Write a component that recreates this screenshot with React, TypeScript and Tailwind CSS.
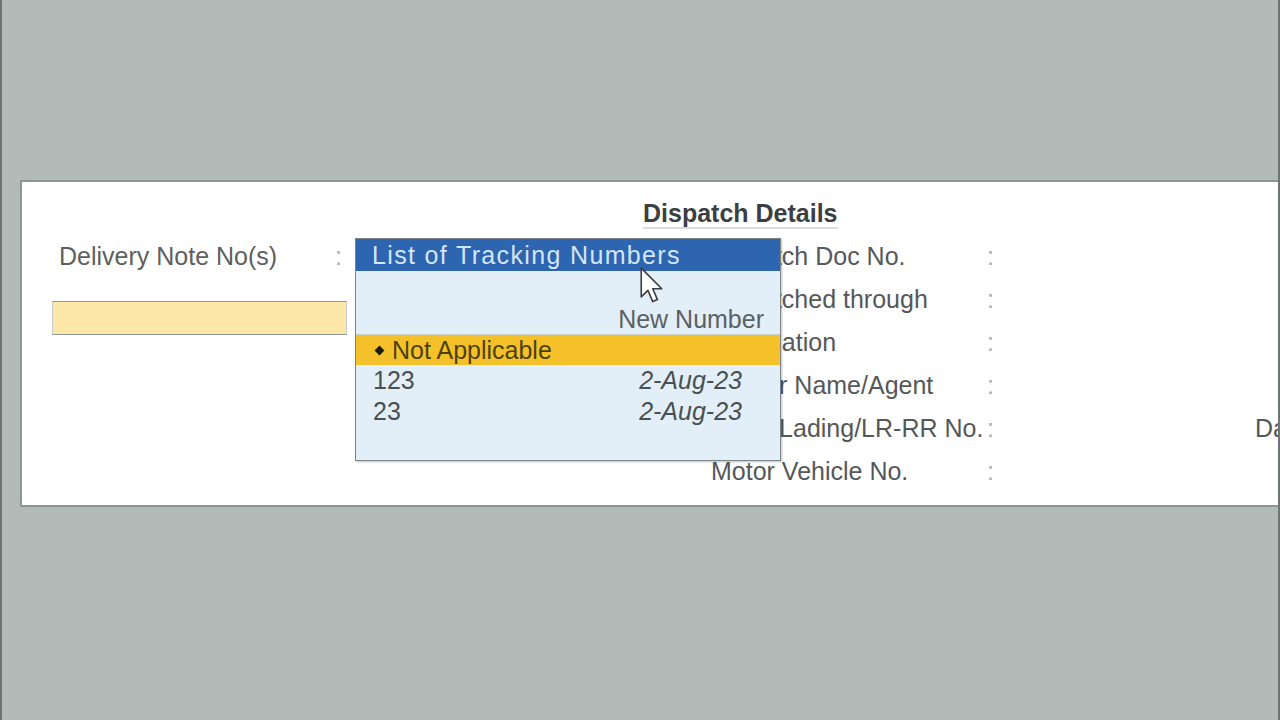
import React from "react";

const font = { fontFamily: '"Liberation Sans", Arial, sans-serif' };

const dispatchRows = [
  "Dispatch Doc No.",
  "Dispatched through",
  "Destination",
  "Carrier Name/Agent",
  "Bill of Lading/LR-RR No.",
  "Motor Vehicle No.",
];

const trackingRows = [
  { no: "123", date: "2-Aug-23" },
  { no: "23", date: "2-Aug-23" },
];

function Cursor() {
  return (
    <svg width="23" height="36" viewBox="0 0 12.6 20" className="absolute left-[284px] top-[28px]">
      <path
        d="M0.6 0.6 L0.6 16.6 L4.3 13 L7 19.2 L9.6 18.1 L7 12.1 L12 12.1 Z"
        fill="#ffffff"
        stroke="#3a3f44"
        strokeWidth="0.9"
        strokeLinejoin="round"
      />
    </svg>
  );
}

function TrackingPopup() {
  return (
    <div className="absolute left-[333px] top-[56px] w-[426px] h-[223px] border border-[#7c8587] bg-[#e3eff8] shadow-[1px_1px_2px_rgba(0,0,0,0.25)]">
      <div className="h-[32px] bg-[#2d65b1] pl-[16px] text-[25px] leading-[32px] tracking-[1.35px] text-[#d5e5fa]">
        List of Tracking Numbers
      </div>
      <div className="h-[33px]" />
      <div className="h-[30px] pr-[16px] text-right text-[25px] leading-[30px] text-[#5b6063]">
        New Number
      </div>
      <div className="h-[1px] bg-[#c9cfc9]" />
      <div className="flex h-[30px] items-center bg-[#f4c12b] pl-[20px] text-[25px] leading-[30px] text-[#4e4108]">
        <span className="mr-[9px] inline-block h-[7px] w-[7px] rotate-45 bg-[#1d1a10]" />
        Not Applicable
      </div>
      {trackingRows.map((r) => (
        <div key={r.no} className="flex h-[31px] items-center justify-between pl-[17px] pr-[38px] text-[25px] leading-[31px] text-[#4a4f52]">
          <span>{r.no}</span>
          <span className="italic">{r.date}</span>
        </div>
      ))}
      <Cursor />
    </div>
  );
}

export default function App() {
  return (
    <div style={font} className="h-[720px] w-[1280px] overflow-hidden border-x-2 border-[#6e7574] bg-[#b3bbb8]">
      <div className="ml-[18px] mt-[180px] relative h-[327px] overflow-hidden border-y-2 border-l-2 border-[#8e9594] bg-white">
        <div className="pl-[621px] pt-[17px]">
          <div className="inline-block border-b-2 border-[#d9dddd] text-[25px] font-bold leading-[28px] text-[#3c3f41]">
            Dispatch Details
          </div>
        </div>

        <div className="mt-[6px] flex">
          <div className="w-[689px] shrink-0">
            <div className="flex h-[43px] items-center pl-[37px] text-[25px] text-[#5d5f60]">
              <span className="w-[276px]">Delivery Note No(s)</span>
              <span className="text-[#a9adae]">:</span>
            </div>
            <div className="ml-[30px] mt-[23px] h-[34px] w-[295px] border-y border-x border-y-[#8c9697] border-x-[#c9cccc] bg-[#fde7a8]" />
          </div>

          <div className="flex shrink-0 flex-col">
            {dispatchRows.map((label, i) => (
              <div key={label} className="flex h-[43px] items-center whitespace-nowrap text-[25px] text-[#55585a]">
                <span className="w-[276px]">{label}</span>
                <span className="text-[#a9adae]">:</span>
                {i === 4 && <span className="ml-[261px]">Date</span>}
              </div>
            ))}
          </div>
        </div>

        <TrackingPopup />
      </div>
    </div>
  );
}
